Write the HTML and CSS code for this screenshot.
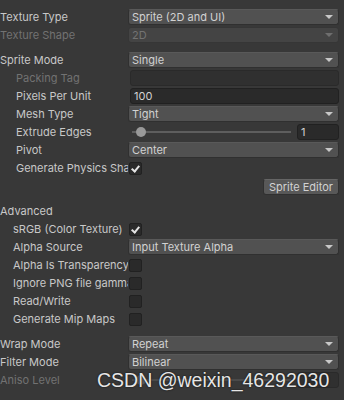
FILE: index.html
```html
<!DOCTYPE html>
<html lang="en">

<head>
  <meta charset="UTF-8">
  <title>Texture Import Settings</title>
  <link rel="stylesheet" href="styles.css">
</head>

<body>

  <div class="inspector">

    <div class="group">
      <div class="row">
        <span class="label">Texture Type</span>
        <div class="dropdown">Sprite (2D and UI)</div>
      </div>
      <div class="row disabled">
        <span class="label">Texture Shape</span>
        <div class="dropdown">2D</div>
      </div>
    </div>

    <div class="group">
      <div class="row">
        <span class="label">Sprite Mode</span>
        <div class="dropdown">Single</div>
      </div>
      <div class="row sub disabled">
        <span class="label">Packing Tag</span>
        <div class="field"></div>
      </div>
      <div class="row sub">
        <span class="label">Pixels Per Unit</span>
        <div class="field">100</div>
      </div>
      <div class="row sub">
        <span class="label">Mesh Type</span>
        <div class="dropdown">Tight</div>
      </div>
      <div class="row sub">
        <span class="label">Extrude Edges</span>
        <div class="slider">
          <div class="track"><span class="thumb"></span></div>
          <div class="field num">1</div>
        </div>
      </div>
      <div class="row sub">
        <span class="label">Pivot</span>
        <div class="dropdown">Center</div>
      </div>
      <div class="row sub">
        <span class="label">Generate Physics Shape</span>
        <div class="checkbox checked"></div>
      </div>
      <div class="button-row">
        <button class="button">Sprite Editor</button>
      </div>
    </div>

    <div class="group">
      <div class="row">
        <span class="label">Advanced</span>
      </div>
      <div class="row adv">
        <span class="label">sRGB (Color Texture)</span>
        <div class="checkbox checked"></div>
      </div>
      <div class="row adv">
        <span class="label">Alpha Source</span>
        <div class="dropdown">Input Texture Alpha</div>
      </div>
      <div class="row adv">
        <span class="label">Alpha Is Transparency</span>
        <div class="checkbox"></div>
      </div>
      <div class="row adv">
        <span class="label">Ignore PNG file gamma</span>
        <div class="checkbox"></div>
      </div>
      <div class="row adv">
        <span class="label">Read/Write</span>
        <div class="checkbox"></div>
      </div>
      <div class="row adv">
        <span class="label">Generate Mip Maps</span>
        <div class="checkbox"></div>
      </div>
    </div>

    <div class="group">
      <div class="row">
        <span class="label">Wrap Mode</span>
        <div class="dropdown">Repeat</div>
      </div>
      <div class="row">
        <span class="label">Filter Mode</span>
        <div class="dropdown">Bilinear</div>
      </div>
      <div class="row disabled">
        <span class="label">Aniso Level</span>
        <div class="slider">
          <div class="track"><span class="thumb"></span></div>
          <div class="field num"></div>
        </div>
      </div>
    </div>

    <div class="watermark">CSDN @weixin_46292030</div>
  </div>

</body>

</html>
```

FILE: styles.css
```css
body {
  margin: 0;
  background: #383838;
  font-family: Inter, "Noto Sans", sans-serif;
  font-size: 11px;
  color: #c8c8c8;
}

.inspector {
  position: relative;
  width: 344px;
  height: 400px;
  padding-top: 8px;
  box-sizing: border-box;
}

.group {
  margin-bottom: 7px;
}

.row {
  display: flex;
  align-items: center;
  height: 18px;
  padding-right: 5px;
}

.label {
  flex: 0 0 128px;
  width: 128px;
  white-space: nowrap;
  overflow: hidden;
  box-sizing: border-box;
}

.row.sub .label {
  padding-left: 16px;
}

.row.adv .label {
  padding-left: 13px;
}

.disabled .label {
  color: #727272;
}

.dropdown {
  position: relative;
  flex: 1;
  height: 16px;
  line-height: 14px;
  padding-left: 3px;
  background: #515151;
  border: 1px solid #303030;
  border-top-color: #595959;
  border-radius: 3px;
  box-sizing: border-box;
  color: #d2d2d2;
}

.dropdown::after {
  content: "";
  position: absolute;
  right: 5px;
  top: 5px;
  border-left: 4px solid transparent;
  border-right: 4px solid transparent;
  border-top: 4px solid #c8c8c8;
}

.disabled .dropdown {
  background: #444;
  border-color: #363636;
  color: #737373;
}

.disabled .dropdown::after {
  border-top-color: #6e6e6e;
}

.field {
  flex: 1;
  height: 16px;
  line-height: 14px;
  margin-left: 2px;
  padding-left: 3px;
  background: #2a2a2a;
  border: 1px solid #212121;
  border-radius: 3px;
  box-sizing: border-box;
  color: #d2d2d2;
}

.slider {
  flex: 1;
  display: flex;
  align-items: center;
}

.track {
  position: relative;
  flex: 1;
  height: 2px;
  margin: 0 6px 0 4px;
  background: #5e5e5e;
}

.thumb {
  position: absolute;
  left: 4px;
  top: -4px;
  width: 10px;
  height: 10px;
  border-radius: 50%;
  background: #999;
}

.disabled .track {
  background: #4a4a4a;
}

.disabled .thumb {
  background: #5a5a5a;
}

.field.num {
  flex: 0 0 42px;
  margin-left: 0;
}

.disabled .field {
  background: #303030;
  border-color: #2a2a2a;
}

.checkbox {
  width: 13px;
  height: 13px;
  margin-left: 1px;
  background: #2a2a2a;
  border: 1px solid #212121;
  border-radius: 2px;
  box-sizing: border-box;
  position: relative;
}

.checkbox.checked::after {
  content: "";
  position: absolute;
  left: 3px;
  top: 1px;
  width: 3px;
  height: 6px;
  border-right: 2px solid #e4e4e4;
  border-bottom: 2px solid #e4e4e4;
  transform: rotate(40deg);
}

.button-row {
  display: flex;
  justify-content: flex-end;
  padding: 2px 5px 0 0;
}

.button {
  height: 16px;
  padding: 0 5px;
  font: inherit;
  color: #d2d2d2;
  background: #585858;
  border: 1px solid #303030;
  border-top-color: #656565;
  border-radius: 3px;
}

.watermark {
  position: absolute;
  left: 97px;
  top: 369px;
  font-family: "Liberation Sans", Arial, sans-serif;
  font-size: 19.5px;
  color: #e6e6e6;
  text-shadow: 0 0 2px #1a1a1a, 0 0 1px #1a1a1a;
  white-space: nowrap;
}
```
